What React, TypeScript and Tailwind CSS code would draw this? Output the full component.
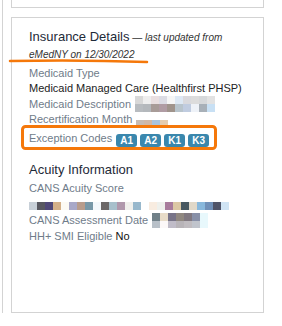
import React from "react";

const descRow1 = ["#d8d8d8", "#eeeeee", "#e9dfe0", "#dcdce4", "#f6f6f6", "#dde8f4", "#d9d9dd", "#dcdcdc", "#d6d8da", "#e2e2e2"];
const descRow2 = ["#b8bcc0", "#b4b8bc", "#a89c98", "#b09ca4", "#a0948c", "#b8c4cc", "#c0cce0", "#eef2f8", "#a8b0b8", "#c8e0f4"];
const recert = ["#c8bcb4", "#d0b8a8", "#a8c4e0", "#e4ccb0"];
const acuity = [
  "#c8d0d8", "#585860", "#504878", "#d4b088", "#fcfaf4", "#a8a8c8", "#b89c8c", "#7898a8",
  "#f4f8fc", "#6c6868", "#a8c0cc", "#b098ac", "#f0f0ec", "#98b8cc", "#ffffff", "#f8ece0",
  "#eef0ec", "#a87c9c", "#dcc8a4", "#485860", "#e0d8c8", "#88b8dc", "#7090b8", "#505468", "#d0e4f4",
];
const dateRow1 = ["#708088", "#e8dcc8", "#787488", "#908880", "#807880", "#8890a8", "#e8f8fc"];
const dateRow2 = ["#b8c0c8", "#fcf8f8", "#c0bcc8", "#b8b4b8", "#c0bcc0", "#c0c4cc", "#e8f8fc"];

function Cells({ colors, h }: { colors: string[]; h: number }) {
  return (
    <div className="flex">
      {colors.map((c, i) => (
        <div key={i} className="w-[8px]" style={{ backgroundColor: c, height: h }} />
      ))}
    </div>
  );
}

function Badge({ children }: { children: React.ReactNode }) {
  return (
    <span className="flex h-[13px] w-[21px] items-center justify-center rounded-[3px] bg-[#3a87ad] text-[10px] font-bold leading-none text-white">
      {children}
    </span>
  );
}

export default function App() {
  return (
    <div className="relative flex h-[326px] w-[282px] overflow-hidden bg-white font-['Liberation_Sans',Arial,sans-serif]">
      <div className="h-[313px] w-[3px] border-r border-[#d3d3d3]" />
      <div className="ml-[8px] flex w-[253px] flex-col">
        <div className="h-[8px] border-x border-b border-[#d3d3d3]" />
        <div className="mt-[9px] h-[296px] border border-[#d3d3d3] pl-[17px] pt-[11px]">
          <div className="text-[13px] leading-[16px] text-[#1e2a38]">
            Insurance Details
            <span className="text-[10px] italic text-[#333]"> — last updated from eMedNY on 12/30/2022</span>
          </div>
          <div className="mt-[3px] text-[11px] leading-[15.4px]">
            <div className="text-[#6f7c8a]">Medicaid Type</div>
            <div className="text-[#222]">Medicaid Managed Care (Healthfirst PHSP)</div>
            <div className="flex h-[15.4px] items-start gap-[4px]">
              <span className="text-[#6f7c8a]">Medicaid Description</span>
              <div className="-mt-[0.5px] flex flex-col">
                <Cells colors={descRow1} h={8} />
                <Cells colors={descRow2} h={8} />
              </div>
            </div>
            <div className="flex h-[15.4px] items-start gap-[4px]">
              <span className="text-[#6f7c8a]">Recertification Month</span>
              <div className="mt-[7.5px]">
                <Cells colors={recert} h={6} />
              </div>
            </div>
            <div className="mt-[3px] flex items-start gap-[3px]">
              <span className="mr-[1px] text-[#6f7c8a]">Exception Codes</span>
              <div className="mt-[3.5px] flex gap-[3px]">
                <Badge>A1</Badge>
                <Badge>A2</Badge>
                <Badge>K1</Badge>
                <Badge>K3</Badge>
              </div>
            </div>
          </div>
          <div className="mt-[15px] text-[13px] leading-[16px] text-[#1e2a38]">Acuity Information</div>
          <div className="mt-[1.5px] text-[11px] leading-[16px]">
            <div className="text-[#6f7c8a]">CANS Acuity Score</div>
            <div className="mt-[6px]">
              <Cells colors={acuity} h={8} />
            </div>
            <div className="mt-[2px] flex h-[16px] items-start gap-[4px]">
              <span className="text-[#6f7c8a]">CANS Assessment Date</span>
              <div className="mt-[1px] flex flex-col">
                <Cells colors={dateRow1} h={8} />
                <Cells colors={dateRow2} h={7} />
              </div>
            </div>
            <div>
              <span className="text-[#6f7c8a]">HH+ SMI Eligible </span>
              <span className="text-[#111]">No</span>
            </div>
          </div>
        </div>
      </div>
      <svg className="pointer-events-none absolute left-0 top-0" width="282" height="326">
        <path d="M10 61 Q 80 59.5 147 62" fill="none" stroke="#f5780a" strokeWidth="2.5" strokeLinecap="round" />
        <rect x="22.5" y="126.5" width="193" height="22" rx="3" fill="none" stroke="#f5780a" strokeWidth="3" />
      </svg>
    </div>
  );
}
